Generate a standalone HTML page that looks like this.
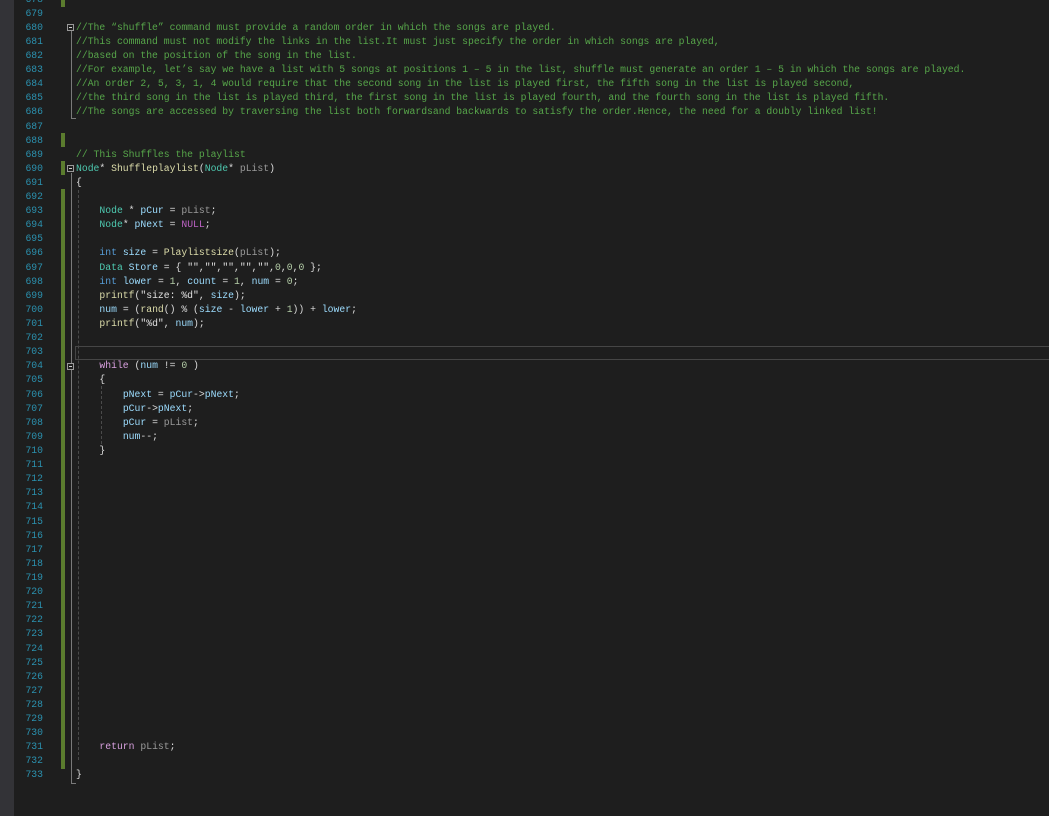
<!DOCTYPE html>
<html><head><meta charset="utf-8"><style>
html,body{margin:0;padding:0;background:#1e1e1e;width:1049px;height:816px;overflow:hidden;position:relative}
.strip{position:absolute;left:0;top:0;width:14px;height:816px;background:#333337}
.l{position:absolute;left:0;height:14px;line-height:14px;font-family:"Liberation Mono",monospace;font-size:9.75px;white-space:pre;color:#dcdcdc}
.n{position:absolute;left:14px;width:29px;text-align:right;color:#2b91af}
.c{position:absolute;left:76px}
.cm{color:#57a64a}.t{color:#4ec9b0}.f{color:#dcdcaa}.k{color:#569cd6}.ct{color:#d8a0df}.v{color:#9cdcfe}.p{color:#9a9a9a}.num{color:#b5cea8}.s{color:#e0e0e0}.m{color:#bd63c5}
.g{position:absolute;left:61px;width:4px;background:#5b7c2e}
.box{position:absolute;left:67px;width:7px;height:7px;border:1px solid #999;box-sizing:border-box}
.box:after{content:"";position:absolute;left:1px;top:2px;width:3px;height:1px;background:#ccc}
.ol{position:absolute;border-left:1px solid #7a7a7a}
.dg{position:absolute;border-left:1px dashed #4a4a4a;width:0}
</style></head><body>
<div class="strip"></div>
<div class="g" style="top:0;height:7px"></div>
<div class="g" style="top:133px;height:14px"></div>
<div class="g" style="top:161px;height:14px"></div>
<div class="g" style="top:189px;height:580px"></div>
<div class="ol" style="left:71px;top:31px;width:4px;border-bottom:1px solid #7a7a7a;height:87px"></div>
<div class="ol" style="left:71px;top:173px;height:610px;width:4px;border-bottom:1px solid #7a7a7a"></div>
<div class="dg" style="left:78px;top:190px;height:570px"></div>
<div class="dg" style="left:101px;top:386px;height:58px"></div>
<div style="position:absolute;left:75px;top:346px;width:980px;height:12px;border:1px solid #464646"></div>
<div class="box" style="top:24px;background:#1e1e1e"></div>
<div class="box" style="top:165px;background:#1e1e1e"></div>
<div class="box" style="top:363px;background:#1e1e1e"></div>

<div class="l" style="top:-7.5px"><span class="n">678</span></div>
<div class="l" style="top:6.6px"><span class="n">679</span></div>
<div class="l" style="top:20.7px"><span class="n">680</span><span class="c cm">//The “shuffle” command must provide a random order in which the songs are played.</span></div>
<div class="l" style="top:34.8px"><span class="n">681</span><span class="c cm">//This command must not modify the links in the list.It must just specify the order in which songs are played,</span></div>
<div class="l" style="top:48.9px"><span class="n">682</span><span class="c cm">//based on the position of the song in the list.</span></div>
<div class="l" style="top:63px"><span class="n">683</span><span class="c cm">//For example, let’s say we have a list with 5 songs at positions 1 – 5 in the list, shuffle must generate an order 1 – 5 in which the songs are played.</span></div>
<div class="l" style="top:77.1px"><span class="n">684</span><span class="c cm">//An order 2, 5, 3, 1, 4 would require that the second song in the list is played first, the fifth song in the list is played second,</span></div>
<div class="l" style="top:91.3px"><span class="n">685</span><span class="c cm">//the third song in the list is played third, the first song in the list is played fourth, and the fourth song in the list is played fifth.</span></div>
<div class="l" style="top:105.4px"><span class="n">686</span><span class="c cm">//The songs are accessed by traversing the list both forwardsand backwards to satisfy the order.Hence, the need for a doubly linked list!</span></div>
<div class="l" style="top:119.5px"><span class="n">687</span></div>
<div class="l" style="top:133.6px"><span class="n">688</span></div>
<div class="l" style="top:147.7px"><span class="n">689</span><span class="c cm">// This Shuffles the playlist</span></div>
<div class="l" style="top:161.8px"><span class="n">690</span><span class="c"><span class="t">Node</span>* <span class="f">Shuffleplaylist</span>(<span class="t">Node</span>* <span class="p">pList</span>)</span></div>
<div class="l" style="top:175.9px"><span class="n">691</span><span class="c">{</span></div>
<div class="l" style="top:190px"><span class="n">692</span></div>
<div class="l" style="top:204.1px"><span class="n">693</span><span class="c">    <span class="t">Node</span> * <span class="v">pCur</span> = <span class="p">pList</span>;</span></div>
<div class="l" style="top:218.2px"><span class="n">694</span><span class="c">    <span class="t">Node</span>* <span class="v">pNext</span> = <span class="m">NULL</span>;</span></div>
<div class="l" style="top:232.3px"><span class="n">695</span></div>
<div class="l" style="top:246.4px"><span class="n">696</span><span class="c">    <span class="k">int</span> <span class="v">size</span> = <span class="f">Playlistsize</span>(<span class="p">pList</span>);</span></div>
<div class="l" style="top:260.5px"><span class="n">697</span><span class="c">    <span class="t">Data</span> <span class="v">Store</span> = { <span class="s">""</span>,<span class="s">""</span>,<span class="s">""</span>,<span class="s">""</span>,<span class="s">""</span>,<span class="num">0</span>,<span class="num">0</span>,<span class="num">0</span> };</span></div>
<div class="l" style="top:274.7px"><span class="n">698</span><span class="c">    <span class="k">int</span> <span class="v">lower</span> = <span class="num">1</span>, <span class="v">count</span> = <span class="num">1</span>, <span class="v">num</span> = <span class="num">0</span>;</span></div>
<div class="l" style="top:288.8px"><span class="n">699</span><span class="c">    <span class="f">printf</span>(<span class="s">"size: %d"</span>, <span class="v">size</span>);</span></div>
<div class="l" style="top:302.9px"><span class="n">700</span><span class="c">    <span class="v">num</span> = (<span class="f">rand</span>() % (<span class="v">size</span> - <span class="v">lower</span> + <span class="num">1</span>)) + <span class="v">lower</span>;</span></div>
<div class="l" style="top:317px"><span class="n">701</span><span class="c">    <span class="f">printf</span>(<span class="s">"%d"</span>, <span class="v">num</span>);</span></div>
<div class="l" style="top:331.1px"><span class="n">702</span></div>
<div class="l" style="top:345.2px"><span class="n">703</span></div>
<div class="l" style="top:359.3px"><span class="n">704</span><span class="c">    <span class="ct">while</span> (<span class="v">num</span> != <span class="num">0</span> )</span></div>
<div class="l" style="top:373.4px"><span class="n">705</span><span class="c">    {</span></div>
<div class="l" style="top:387.5px"><span class="n">706</span><span class="c">        <span class="v">pNext</span> = <span class="v">pCur</span>-&gt;<span class="v">pNext</span>;</span></div>
<div class="l" style="top:401.6px"><span class="n">707</span><span class="c">        <span class="v">pCur</span>-&gt;<span class="v">pNext</span>;</span></div>
<div class="l" style="top:415.7px"><span class="n">708</span><span class="c">        <span class="v">pCur</span> = <span class="p">pList</span>;</span></div>
<div class="l" style="top:429.9px"><span class="n">709</span><span class="c">        <span class="v">num</span>--;</span></div>
<div class="l" style="top:444px"><span class="n">710</span><span class="c">    }</span></div>
<div class="l" style="top:458.1px"><span class="n">711</span></div>
<div class="l" style="top:472.2px"><span class="n">712</span></div>
<div class="l" style="top:486.3px"><span class="n">713</span></div>
<div class="l" style="top:500.4px"><span class="n">714</span></div>
<div class="l" style="top:514.5px"><span class="n">715</span></div>
<div class="l" style="top:528.6px"><span class="n">716</span></div>
<div class="l" style="top:542.7px"><span class="n">717</span></div>
<div class="l" style="top:556.8px"><span class="n">718</span></div>
<div class="l" style="top:570.9px"><span class="n">719</span></div>
<div class="l" style="top:585px"><span class="n">720</span></div>
<div class="l" style="top:599.1px"><span class="n">721</span></div>
<div class="l" style="top:613.3px"><span class="n">722</span></div>
<div class="l" style="top:627.4px"><span class="n">723</span></div>
<div class="l" style="top:641.5px"><span class="n">724</span></div>
<div class="l" style="top:655.6px"><span class="n">725</span></div>
<div class="l" style="top:669.7px"><span class="n">726</span></div>
<div class="l" style="top:683.8px"><span class="n">727</span></div>
<div class="l" style="top:697.9px"><span class="n">728</span></div>
<div class="l" style="top:712px"><span class="n">729</span></div>
<div class="l" style="top:726.1px"><span class="n">730</span></div>
<div class="l" style="top:740.2px"><span class="n">731</span><span class="c">    <span class="ct">return</span> <span class="p">pList</span>;</span></div>
<div class="l" style="top:754.3px"><span class="n">732</span></div>
<div class="l" style="top:768.4px"><span class="n">733</span><span class="c">}</span></div>
</body></html>
